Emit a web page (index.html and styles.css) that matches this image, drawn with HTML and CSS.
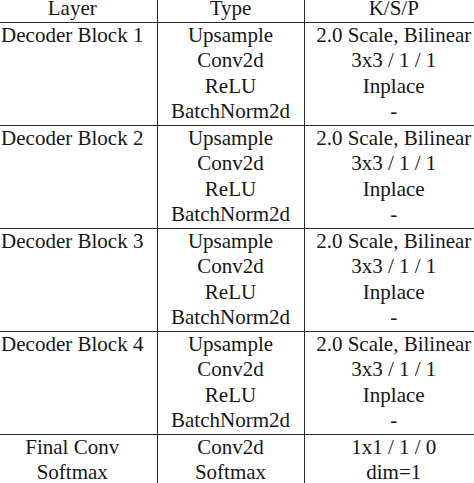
FILE: index.html
```html
<!DOCTYPE html>
<html>
<head>
<meta charset="utf-8">
<link rel="stylesheet" href="styles.css">
</head>
<body>
<table class="arch">
  <colgroup>
    <col class="col-layer">
    <col class="col-type">
    <col class="col-ksp">
  </colgroup>
  <thead>
    <tr><th>Layer</th><th class="mid">Type</th><th>K/S/P</th></tr>
  </thead>
  <tbody class="block">
    <tr><td rowspan="4" class="layer">Decoder Block 1</td><td class="mid">Upsample</td><td>2.0 Scale, Bilinear</td></tr>
    <tr><td class="mid">Conv2d</td><td>3x3 / 1 / 1</td></tr>
    <tr><td class="mid">ReLU</td><td>Inplace</td></tr>
    <tr><td class="mid">BatchNorm2d</td><td>-</td></tr>
  </tbody>
  <tbody class="block">
    <tr><td rowspan="4" class="layer">Decoder Block 2</td><td class="mid">Upsample</td><td>2.0 Scale, Bilinear</td></tr>
    <tr><td class="mid">Conv2d</td><td>3x3 / 1 / 1</td></tr>
    <tr><td class="mid">ReLU</td><td>Inplace</td></tr>
    <tr><td class="mid">BatchNorm2d</td><td>-</td></tr>
  </tbody>
  <tbody class="block">
    <tr><td rowspan="4" class="layer">Decoder Block 3</td><td class="mid">Upsample</td><td>2.0 Scale, Bilinear</td></tr>
    <tr><td class="mid">Conv2d</td><td>3x3 / 1 / 1</td></tr>
    <tr><td class="mid">ReLU</td><td>Inplace</td></tr>
    <tr><td class="mid">BatchNorm2d</td><td>-</td></tr>
  </tbody>
  <tbody class="block">
    <tr><td rowspan="4" class="layer">Decoder Block 4</td><td class="mid">Upsample</td><td>2.0 Scale, Bilinear</td></tr>
    <tr><td class="mid">Conv2d</td><td>3x3 / 1 / 1</td></tr>
    <tr><td class="mid">ReLU</td><td>Inplace</td></tr>
    <tr><td class="mid">BatchNorm2d</td><td>-</td></tr>
  </tbody>
  <tbody class="block">
    <tr><td>Final Conv</td><td class="mid">Conv2d</td><td>1x1 / 1 / 0</td></tr>
    <tr><td>Softmax</td><td class="mid">Softmax</td><td>dim=1</td></tr>
  </tbody>
</table>
</body>
</html>
```

FILE: styles.css
```css
html, body {
  margin: 0;
  padding: 0;
  background: #ffffff;
  overflow: hidden;
}

.arch {
  border-collapse: collapse;
  table-layout: fixed;
  width: 495px;
  margin-left: -12px;
  margin-top: -4px;
  font-family: "Liberation Serif", "Times New Roman", serif;
  font-size: 21px;
  color: #161616;
}

.col-layer { width: 169px; }
.col-type { width: 147px; }
.col-ksp { width: 179px; }

.arch th,
.arch td {
  padding: 0;
  height: 25.5px;
  line-height: 25.5px;
  text-align: center;
  white-space: nowrap;
  font-weight: normal;
  vertical-align: top;
}

.arch .mid {
  border-left: 1px solid #2a2a2a;
  border-right: 1px solid #2a2a2a;
}

.arch .block {
  border-top: 1px solid #2a2a2a;
}
```
